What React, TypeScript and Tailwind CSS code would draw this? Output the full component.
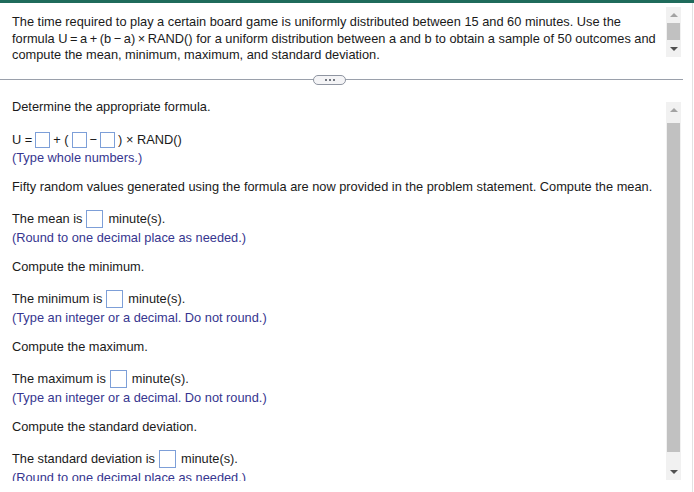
const hint = 'text-[#36368f]'

function Box() {
  return <span className="inline-block w-[15px] h-[16px] border border-[#7d9fd8] bg-white align-middle mx-[3px]" />
}

function Scrollbar({ h, thumbTop, thumbH }: { h: string; thumbTop: string; thumbH: string }) {
  return (
    <div className={`flex flex-col items-center w-[15px] ${h} bg-[#f1f1f1] shrink-0`}>
      <div className="h-[16px] flex items-center justify-center">
        <span className="block w-0 h-0 border-x-[4px] border-x-transparent border-b-[4px] border-b-[#a3a3a3]" />
      </div>
      <div className={thumbTop} />
      <div className={`w-[13px] ${thumbH} bg-[#c1c1c1]`} />
      <div className="flex-1" />
      <div className="h-[16px] flex items-center justify-center">
        <span className="block w-0 h-0 border-x-[4px] border-x-transparent border-t-[4px] border-t-[#505050]" />
      </div>
    </div>
  )
}

function Answer({ label }: { label: string }) {
  return (
    <p className="flex items-center h-[18px]">
      {label}
      <span className="ml-[4px] mr-[5px]">
        <span className="inline-block w-[17px] h-[18px] border border-[#7d9fd8] bg-white align-middle" />
      </span>
      minute(s).
    </p>
  )
}

export default function App() {
  return (
    <div
      className="w-[694px] h-[492px] bg-white overflow-hidden relative text-[12.8px] text-[#1a1a1a]"
      style={{ fontFamily: '"Liberation Sans", Arial, sans-serif' }}
    >
      <div className="h-[3px] bg-[#1f6b5b]" />
      <div className="border-r border-[#e2e2e2] w-[693px] h-[489px]">
        <div className="flex pt-[4px] pr-[11px]">
          <p className="flex-1 pl-[12px] pr-[4px] pt-[7px] leading-[16.5px]">
            The time required to play a certain board game is uniformly distributed between 15 and 60 minutes. Use the formula U{'\u2009'}={'\u2009'}a{'\u2009'}+{'\u2009'}(b{'\u2009'}−{'\u2009'}a){'\u2009'}×{'\u2009'}RAND() for a uniform distribution between a and b to obtain a sample of 50 outcomes and compute the mean, minimum, maximum, and standard deviation.
          </p>
          <Scrollbar h="h-[50px]" thumbTop="h-0" thumbH="h-[17px]" />
        </div>

        <div className="relative mt-[15px] h-[1px] w-[683px] bg-[#9aa0ab]">
          <div className="absolute left-[313px] top-[-4px] w-[33px] h-[10px] rounded-full border border-[#8f95a1] bg-[#f4f4f6] flex items-center justify-center gap-[2px]">
            <span className="w-[2px] h-[2px] rounded-full bg-[#4a4f5a]" />
            <span className="w-[2px] h-[2px] rounded-full bg-[#4a4f5a]" />
            <span className="w-[2px] h-[2px] rounded-full bg-[#4a4f5a]" />
          </div>
        </div>

        <div className="flex mt-[19px] pr-[11px]">
          <div className="flex-1 h-[382px] overflow-hidden pl-[12px]">
            <p className="leading-[16px]">Determine the appropriate formula.</p>

            <p className="mt-[17px] flex items-center h-[16px]">
              U =<Box />+ (<Box />−<Box />) × RAND()
            </p>
            <p className={`${hint} leading-[16px] mt-[2px]`}>(Type whole numbers.)</p>

            <p className="mt-[13px] leading-[16px]">
              Fifty random values generated using the formula are now provided in the problem statement. Compute the mean.
            </p>

            <div className="mt-[15px]">
              <Answer label="The mean is" />
              <p className={`${hint} leading-[16px] mt-[2px]`}>(Round to one decimal place as needed.)</p>
            </div>

            <p className="mt-[13px] leading-[16px]">Compute the minimum.</p>

            <div className="mt-[15px]">
              <Answer label="The minimum is" />
              <p className={`${hint} leading-[16px] mt-[2px]`}>(Type an integer or a decimal. Do not round.)</p>
            </div>

            <p className="mt-[13px] leading-[16px]">Compute the maximum.</p>

            <div className="mt-[15px]">
              <Answer label="The maximum is" />
              <p className={`${hint} leading-[16px] mt-[2px]`}>(Type an integer or a decimal. Do not round.)</p>
            </div>

            <p className="mt-[13px] leading-[16px]">Compute the standard deviation.</p>

            <div className="mt-[15px]">
              <Answer label="The standard deviation is" />
              <p className={`${hint} leading-[16px] mt-[2px]`}>(Round to one decimal place as needed.)</p>
            </div>
          </div>
          <div className="pt-[3px]">
            <Scrollbar h="h-[378px]" thumbTop="h-[5px]" thumbH="h-[329px]" />
          </div>
        </div>
      </div>
    </div>
  )
}
